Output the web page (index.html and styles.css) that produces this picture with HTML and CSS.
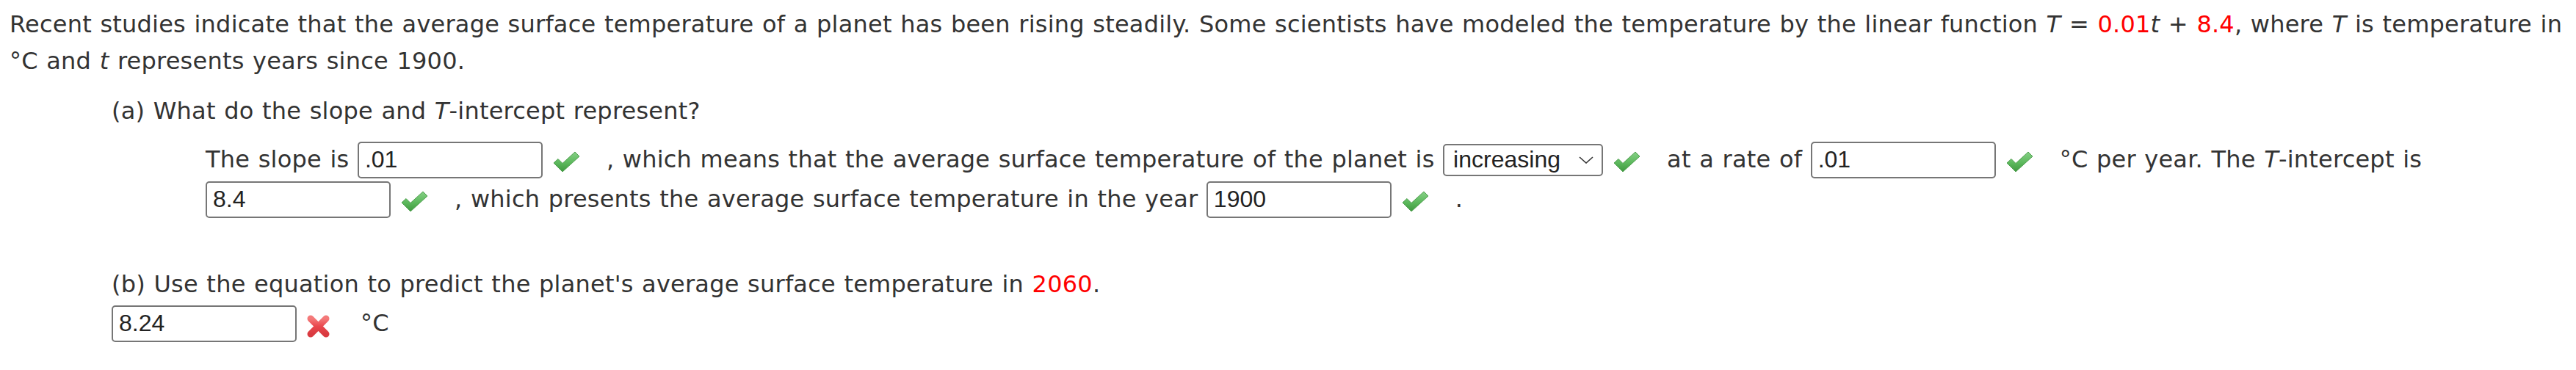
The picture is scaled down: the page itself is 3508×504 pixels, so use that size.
FILE: index.html
```html
<!DOCTYPE html>
<html lang="en">
<head>
<meta charset="utf-8">
<title>Linear model of surface temperature</title>
<link rel="stylesheet" href="styles.css">
</head>
<body>
<div class="question">
  <p class="intro">Recent studies indicate that the average surface temperature of a planet has been rising steadily. Some scientists have modeled the temperature by the linear function <i>T</i> = <span class="red">0.01</span><i>t</i> + <span class="red">8.4</span>, where <i>T</i> is temperature in °C and <i>t</i> represents years since 1900.</p>

  <div class="part part-a">
    <p class="prompt">(a) What do the slope and <i>T</i>-intercept represent?</p>
    <div class="answer answer-a">The slope is <input class="field" type="text" value=".01" readonly><span class="mark"><svg viewBox="0 0 38 30" width="38" height="30"><defs><linearGradient id="g1" x1="0" y1="0" x2="0" y2="1"><stop offset="0" stop-color="#86d086"/><stop offset="0.55" stop-color="#5cb85c"/><stop offset="1" stop-color="#3f983f"/></linearGradient></defs><path d="M2 17 L8 11.5 L14 17.5 L31 2 L37 8 L14 29 Z" fill="url(#g1)" stroke="#4f9f4f" stroke-width="1" stroke-linejoin="round"/></svg></span>, which means that the average surface temperature of the planet is <span class="select"><span class="select-text">increasing</span><svg class="chev" viewBox="0 0 20 10" width="20" height="10"><path d="M1 1 L10 9 L19 1" fill="none" stroke="#333" stroke-width="1.6"/></svg></span><span class="mark"><svg viewBox="0 0 38 30" width="38" height="30"><path d="M2 17 L8 11.5 L14 17.5 L31 2 L37 8 L14 29 Z" fill="url(#g1)" stroke="#4f9f4f" stroke-width="1" stroke-linejoin="round"/></svg></span>at a rate of <input class="field" type="text" value=".01" readonly><span class="mark"><svg viewBox="0 0 38 30" width="38" height="30"><path d="M2 17 L8 11.5 L14 17.5 L31 2 L37 8 L14 29 Z" fill="url(#g1)" stroke="#4f9f4f" stroke-width="1" stroke-linejoin="round"/></svg></span>°C per year. The <i>T</i>-intercept is <input class="field" type="text" value="8.4" readonly><span class="mark"><svg viewBox="0 0 38 30" width="38" height="30"><path d="M2 17 L8 11.5 L14 17.5 L31 2 L37 8 L14 29 Z" fill="url(#g1)" stroke="#4f9f4f" stroke-width="1" stroke-linejoin="round"/></svg></span>, which presents the average surface temperature in the year <input class="field" type="text" value="1900" readonly><span class="mark"><svg viewBox="0 0 38 30" width="38" height="30"><path d="M2 17 L8 11.5 L14 17.5 L31 2 L37 8 L14 29 Z" fill="url(#g1)" stroke="#4f9f4f" stroke-width="1" stroke-linejoin="round"/></svg></span>.</div>
  </div>

  <div class="part part-b">
    <p class="prompt">(b) Use the equation to predict the planet's average surface temperature in <span class="red">2060</span>.</p>
    <div class="answer answer-b"><input class="field" type="text" value="8.24" readonly><span class="mark mark-x"><svg viewBox="0 0 33 33" width="33" height="33"><defs><linearGradient id="g2" x1="0" y1="0" x2="0" y2="1"><stop offset="0" stop-color="#f47a7a"/><stop offset="0.5" stop-color="#e9474d"/><stop offset="1" stop-color="#d93a40"/></linearGradient></defs><path d="M6 6 L27 27 M27 6 L6 27" fill="none" stroke="url(#g2)" stroke-width="9" stroke-linecap="round"/></svg></span>°C</div>
  </div>
</div>
</body>
</html>
```

FILE: styles.css
```css
html {
  background: #ffffff;
}

body {
  margin: 8px;
  font-family: "DejaVu Sans", Verdana, sans-serif;
  font-size: 32px;
  letter-spacing: 0.22px;
  word-spacing: 1.1px;
  color: #333333;
}

.question {
  padding-left: 5px;
}

.intro {
  margin: 0;
  line-height: 50px;
}

.red {
  color: #ff0000;
}

i {
  font-style: italic;
}

.part {
  padding-left: 139px;
}

.prompt {
  margin: 0;
  line-height: 50px;
}

.part-a .prompt {
  margin-top: 18px;
}

.answer {
  line-height: 54px;
}

.answer-a {
  margin-top: 14px;
  padding-left: 128px;
}

.part-b {
  margin-top: 64px;
}

.answer-b {
  margin-top: 1px;
}

.field {
  box-sizing: border-box;
  width: 252px;
  height: 50px;
  margin: 0;
  padding: 0 8px;
  border: 2px solid #767676;
  border-radius: 5px;
  background: #ffffff;
  font-family: "Liberation Sans", Arial, sans-serif;
  font-size: 32px;
  letter-spacing: normal;
  word-spacing: normal;
  color: #222222;
  vertical-align: baseline;
  outline: none;
}

.select {
  box-sizing: border-box;
  display: inline-flex;
  align-items: center;
  justify-content: space-between;
  width: 218px;
  height: 44px;
  padding: 0 11px 0 12px;
  border: 2px solid #767676;
  border-radius: 5px;
  font-family: "Liberation Sans", Arial, sans-serif;
  font-size: 32px;
  letter-spacing: normal;
  word-spacing: normal;
  line-height: normal;
  color: #222222;
  vertical-align: baseline;
}

.chev {
  display: block;
}

.mark {
  display: inline-block;
  width: 38px;
  margin: 0 36px 0 13px;
  vertical-align: -7px;
}

.mark svg {
  display: block;
}

.mark-x {
  vertical-align: -10px;
}
```
